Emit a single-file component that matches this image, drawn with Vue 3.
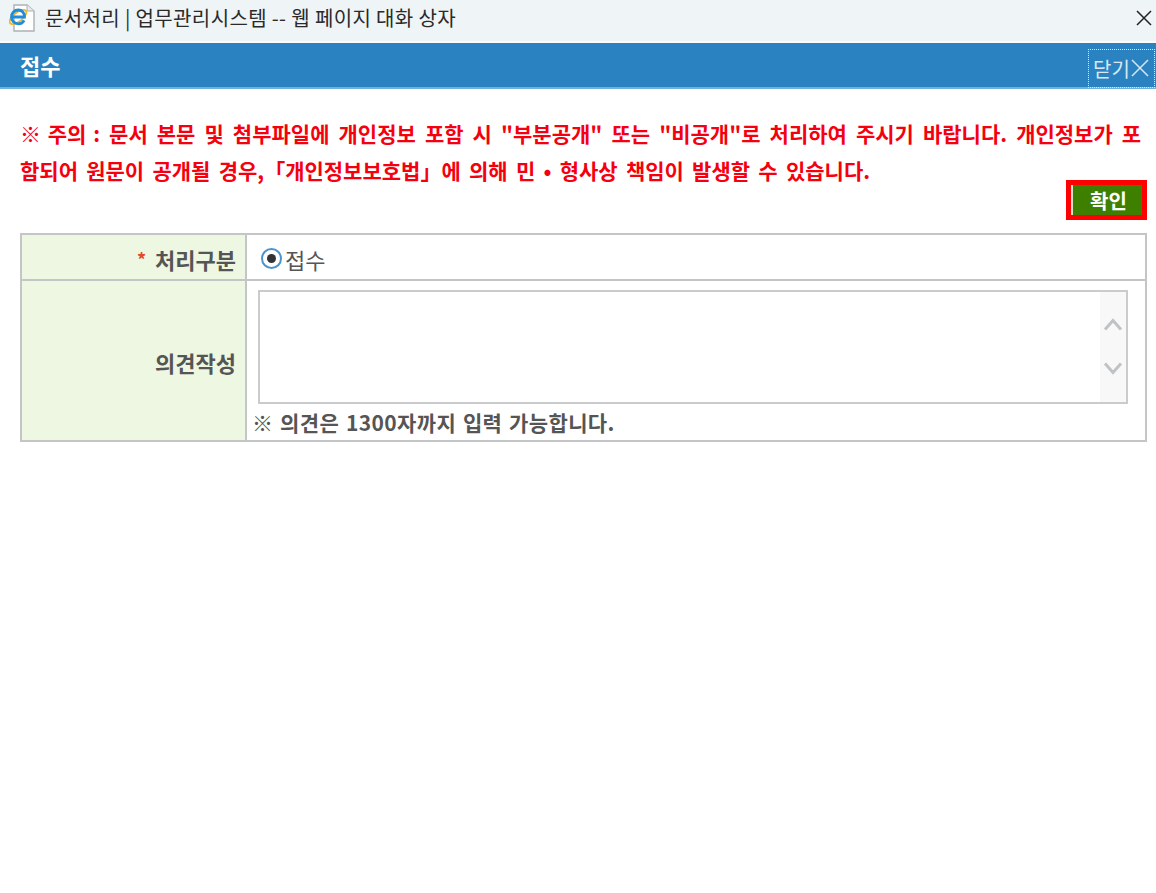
<script setup>
const warningPrefix = '※ 주의 :'
const warningOne = '문서 본문 및 첨부파일에 개인정보 포함 시 "부분공개" 또는 "비공개"로 처리하여 주시기 바랍니다. 개인정보가 포'
const warningTwo = '함되어 원문이 공개될 경우,「개인정보보호법」에 의해 민 • 형사상 책임이 발생할 수 있습니다.'
</script>

<template>
  <div class="window">
    <div class="titlebar">
      <svg class="ie" viewBox="0 0 26 28" width="26" height="28">
        <path d="M5 1h13l7 6v20H5z" fill="#fff" stroke="#aeb1b4" stroke-width="1.400"/>
        <path d="M18 1v6h7" fill="#e6e9eb" stroke="#aeb1b4" stroke-width="1"/>
        <g transform="translate(0 -1.500)">
          <ellipse cx="9" cy="14.500" rx="10" ry="4.500" transform="rotate(-38 9 14.500)" fill="none" stroke="#f2b52c" stroke-width="1.800"/>
          <path d="M3.500 14.500h12c.2-4-2.600-7-6.200-7-3.900 0-6.800 3-6.800 7 0 3.900 2.900 6.800 6.800 6.800 2.700 0 4.800-1.300 5.800-3.400" fill="none" stroke="#1f8ddb" stroke-width="2.800"/>
        </g>
      </svg>
      <span class="title">문서처리 | 업무관리시스템 -- 웹 페이지 대화 상자</span>
      <svg class="close" viewBox="0 0 16 16" width="16" height="16">
        <path d="M1 1l14 14M15 1L1 15" stroke="#222" stroke-width="1.500" fill="none"/>
      </svg>
    </div>

    <div class="header">
      <span class="header-title">접수</span>
      <button class="header-close" type="button">
        <span>닫기</span>
        <svg viewBox="0 0 18 18" width="18" height="18">
          <path d="M1 1l16 16M17 1L1 17" stroke="#d7e8f4" stroke-width="1.500" fill="none"/>
        </svg>
      </button>
    </div>

    <main class="content">
      <p class="warning">
        <span class="line"><span class="prefix">{{ warningPrefix }}</span> {{ warningOne }}</span>
        <span class="line second">{{ warningTwo }}</span>
      </p>

      <div class="actions">
        <button class="confirm" type="button">확인</button>
      </div>

      <div class="form">
        <div class="label first"><span class="star">*</span> 처리구분</div>
        <div class="value first radio-cell">
          <span class="radio"><span class="dot"></span></span>
          <span>접수</span>
        </div>
        <div class="label opinion-label">의견작성</div>
        <div class="value opinion">
          <div class="textarea">
            <div class="scrollbar">
              <svg viewBox="0 0 20 14" width="20" height="14">
                <path d="M2 12.500l8-9 8 9" stroke="#c0c3c5" stroke-width="3" fill="none"/>
              </svg>
              <svg viewBox="0 0 20 14" width="20" height="14">
                <path d="M2 1.500l8 9 8-9" stroke="#c0c3c5" stroke-width="3" fill="none"/>
              </svg>
            </div>
          </div>
          <p class="hint">※ 의견은 1300자까지 입력 가능합니다.</p>
        </div>
      </div>
    </main>
  </div>
</template>

<style>
html, body { background: #fff; }
</style>

<style scoped>
.window {
  width: 1156px;
  height: 893px;
  background: #fff;
  font-family: "Noto Sans CJK KR", "Noto Sans", sans-serif;
  overflow: hidden;
}
.titlebar {
  height: 43px;
  box-sizing: border-box;
  padding: 0 4px 6px 9px;
  display: flex;
  align-items: center;
  background: #eff4f6;
  border-bottom: 2px solid #fafcfc;
}
.ie { flex: none; }
.title {
  margin-left: 10px;
  font-size: 20px;
  letter-spacing: 0.37px;
  color: #2a2a2a;
}
.close { margin-left: auto; }
.header {
  height: 46px;
  box-sizing: border-box;
  display: flex;
  align-items: center;
  justify-content: space-between;
  padding: 0 1px 0 20px;
  background: #2a83c0;
  border-bottom: 2px solid #6fb0dc;
}
.header-title {
  color: #fff;
  font-size: 22px;
  font-weight: 700;
}
.header-close {
  width: 67px;
  height: 39px;
  margin-top: 6px;
  padding: 0 4px;
  display: flex;
  align-items: center;
  gap: 1px;
  background: none;
  border: 1px dotted #d7e8f4;
  color: #d7e8f4;
  font: 400 20px "Noto Sans CJK KR", sans-serif;
}
.content {
  padding: 0 9px 0 20px;
}
.warning {
  height: 74px;
  margin: 26px 0 0;
  font-size: 21px;
  line-height: 37px;
  font-weight: 700;
  color: #f5000f;
  white-space: nowrap;
  word-spacing: 4.300px;
}
.line { display: block; }
.prefix { word-spacing: 2px; }
.second { word-spacing: 3.500px; }
.actions {
  display: flex;
  justify-content: flex-end;
  margin-top: -9px;
}
.confirm {
  width: 81px;
  height: 40px;
  padding: 0 0 0 4px;
  background: #3f7f00;
  border: 5px solid #fe0000;
  box-shadow: inset 2px 0 0 #d8e3cc;
  color: #fff;
  font: 700 20px "Noto Sans CJK KR", sans-serif;
}
.form {
  margin-top: 13px;
  width: 1127px;
  display: grid;
  grid-template-columns: 225px 1fr;
  grid-template-rows: 46px 159px;
  box-sizing: border-box;
  border: 2px solid #c3c5c6;
}
.label {
  display: flex;
  align-items: center;
  justify-content: flex-end;
  gap: 9px;
  padding: 3px 9px 0 0;
  background: #edf7e1;
  border-right: 2px solid #c3c5c6;
  color: #555;
  font-size: 22px;
  font-weight: 700;
}
.opinion-label { padding-top: 2px; }
.first { border-bottom: 2px solid #c3c5c6; }
.star { color: #e2492b; font-size: 18px; }
.value { color: #555; }
.radio-cell {
  display: flex;
  align-items: center;
  gap: 3px;
  padding: 3px 0 0 14px;
  font-size: 22px;
}
.radio {
  width: 21px;
  height: 21px;
  box-sizing: border-box;
  display: flex;
  align-items: center;
  justify-content: center;
  border: 2px solid #4a94cd;
  border-radius: 50%;
  background: #fff;
}
.dot {
  width: 9px;
  height: 9px;
  border-radius: 50%;
  background: #333;
}
.opinion {
  padding: 9px 17px 0 11px;
}
.textarea {
  height: 114px;
  box-sizing: border-box;
  border: 2px solid #c9cbcc;
  display: flex;
  justify-content: flex-end;
}
.scrollbar {
  width: 26px;
  display: flex;
  flex-direction: column;
  align-items: center;
  gap: 31px;
  padding-top: 25px;
  box-sizing: border-box;
  background: #f8f8f8;
}
.hint {
  margin: 4px 0 0 -6px;
  font-size: 21px;
  line-height: 28px;
  font-weight: 700;
  letter-spacing: 0.4px;
  word-spacing: 1.500px;
  color: #555;
  white-space: nowrap;
}
</style>
